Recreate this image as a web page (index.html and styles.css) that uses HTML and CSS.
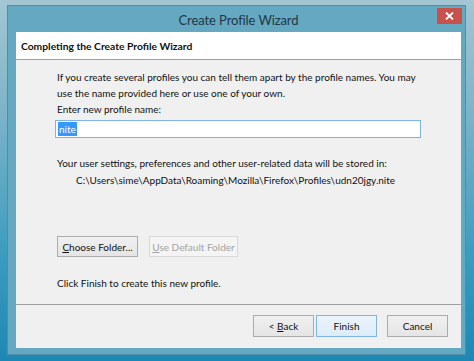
FILE: index.html
```html
<!DOCTYPE html>
<html>
<head>
<meta charset="utf-8">
<link rel="stylesheet" href="styles.css">
</head>
<body>
<div class="window">
  <div class="titlebar">
    <div class="title">Create Profile Wizard</div>
    <div class="close"><svg width="9" height="8" viewBox="0 0 9 8"><path d="M1 0.5 L8 7.5 M8 0.5 L1 7.5" stroke="#fff" stroke-width="1.8"/></svg></div>
  </div>
  <div class="client">
    <div class="header">Completing the Create Profile Wizard</div>
    <div class="main">
      <p class="intro">If you create several profiles you can tell them apart by the profile names. You may use the name provided here or use one of your own.</p>
      <p class="label">Enter new profile name:</p>
      <div class="input"><span class="sel">nite</span></div>
      <p class="store">Your user settings, preferences and other user-related data will be stored in:</p>
      <p class="path">C:\Users\sime\AppData\Roaming\Mozilla\Firefox\Profiles\udn20jgy.nite</p>
      <div class="folder-row">
        <div class="btn choose"><span><u>C</u>hoose Folder...</span></div>
        <div class="btn disabled"><span><u>U</u>se Default Folder</span></div>
      </div>
      <p class="finish-note">Click Finish to create this new profile.</p>
    </div>
    <div class="footer">
      <div class="btn back"><span>&lt; <u>B</u>ack</span></div>
      <div class="btn finish"><span>Finish</span></div>
      <div class="btn cancel"><span>Cancel</span></div>
    </div>
  </div>
</div>
</body>
</html>
```

FILE: styles.css
```css
html, body {
  margin: 0;
  padding: 0;
}
body {
  width: 474px;
  height: 361px;
  overflow: hidden;
  background: linear-gradient(180deg, #a3c6d2 0%, #7fb4c8 30%, #3d9cc0 70%, #1d88b4 100%);
  font-family: Lato, "Open Sans", sans-serif;
  font-size: 10px;
  color: #111;
  padding-top: 6px;
  padding-left: 8px;
  box-sizing: border-box;
}
.window {
  width: 457px;
  height: 348px;
  background: #64a8c1;
  box-shadow: 0 0 0 1px #4d8fa9;
  display: flex;
  flex-direction: column;
}
.titlebar {
  height: 26px;
  position: relative;
  display: flex;
  align-items: center;
  justify-content: center;
}
.title {
  font-size: 13px;
  letter-spacing: -0.1px;
  color: #233843;
  margin-top: 1px;
  margin-left: 4px;
}
.close {
  position: absolute;
  right: 3px;
  top: 2px;
  width: 25px;
  height: 16px;
  background: #c9514c;
  display: flex;
  align-items: center;
  justify-content: center;
}
.client {
  margin: 0 4px 6px 8px;
  flex: 1;
  display: flex;
  flex-direction: column;
  background: #f0f0f0;
}
.header {
  height: 27px;
  background: #fff;
  border-bottom: 1px solid #a0a0a0;
  font-weight: bold;
  font-size: 10.3px;
  padding-left: 5px;
  display: flex;
  align-items: center;
  box-sizing: content-box;
}
.main {
  height: 245px;
  padding-left: 41px;
  padding-right: 40px;
  border-bottom: 1px solid #a0a0a0;
  box-sizing: border-box;
  display: flex;
  flex-direction: column;
}
p {
  margin: 0;
  line-height: 16px;
  white-space: nowrap;
}
.intro {
  margin-top: 9px;
  white-space: normal;
}
.input {
  margin-top: 3px;
  margin-left: -2px;
  width: 366px;
  height: 18px;
  box-sizing: border-box;
  border: 1px solid #7eb4ea;
  background: #fff;
  padding: 1px 0 0 2px;
  display: flex;
  align-items: flex-start;
}
.sel {
  background: #3399ff;
  color: #fff;
  line-height: 14px;
  padding: 0 1px;
}
.store {
  margin-top: 17px;
}
.path {
  margin-top: 1px;
  padding-left: 19px;
}
.folder-row {
  margin-top: 48px;
  display: flex;
  gap: 11px;
}
.btn {
  height: 22px;
  box-sizing: border-box;
  border: 1px solid #acacac;
  background: linear-gradient(#f0f0f0, #e5e5e5);
  display: flex;
  align-items: center;
  justify-content: center;
  color: #111;
  white-space: nowrap;
}
.choose {
  width: 81px;
  height: 21px;
}
.disabled {
  width: 89px;
  height: 21px;
  border-color: #d9d9d9;
  background: #f4f4f4;
  color: #a3a3a3;
}
.finish-note {
  margin-top: 18px;
}
.footer {
  flex: 1;
  display: flex;
  justify-content: flex-end;
  align-items: flex-start;
  padding-top: 10px;
  padding-right: 13px;
}
.back {
  width: 61px;
}
.finish {
  width: 61px;
  margin-left: 2px;
  border-color: #7eb4ea;
  background: linear-gradient(#ecf4fc, #dcecfc);
}
.cancel {
  width: 61px;
  margin-left: 10px;
}
u {
  text-decoration: underline;
  text-underline-offset: 1px;
}
```
